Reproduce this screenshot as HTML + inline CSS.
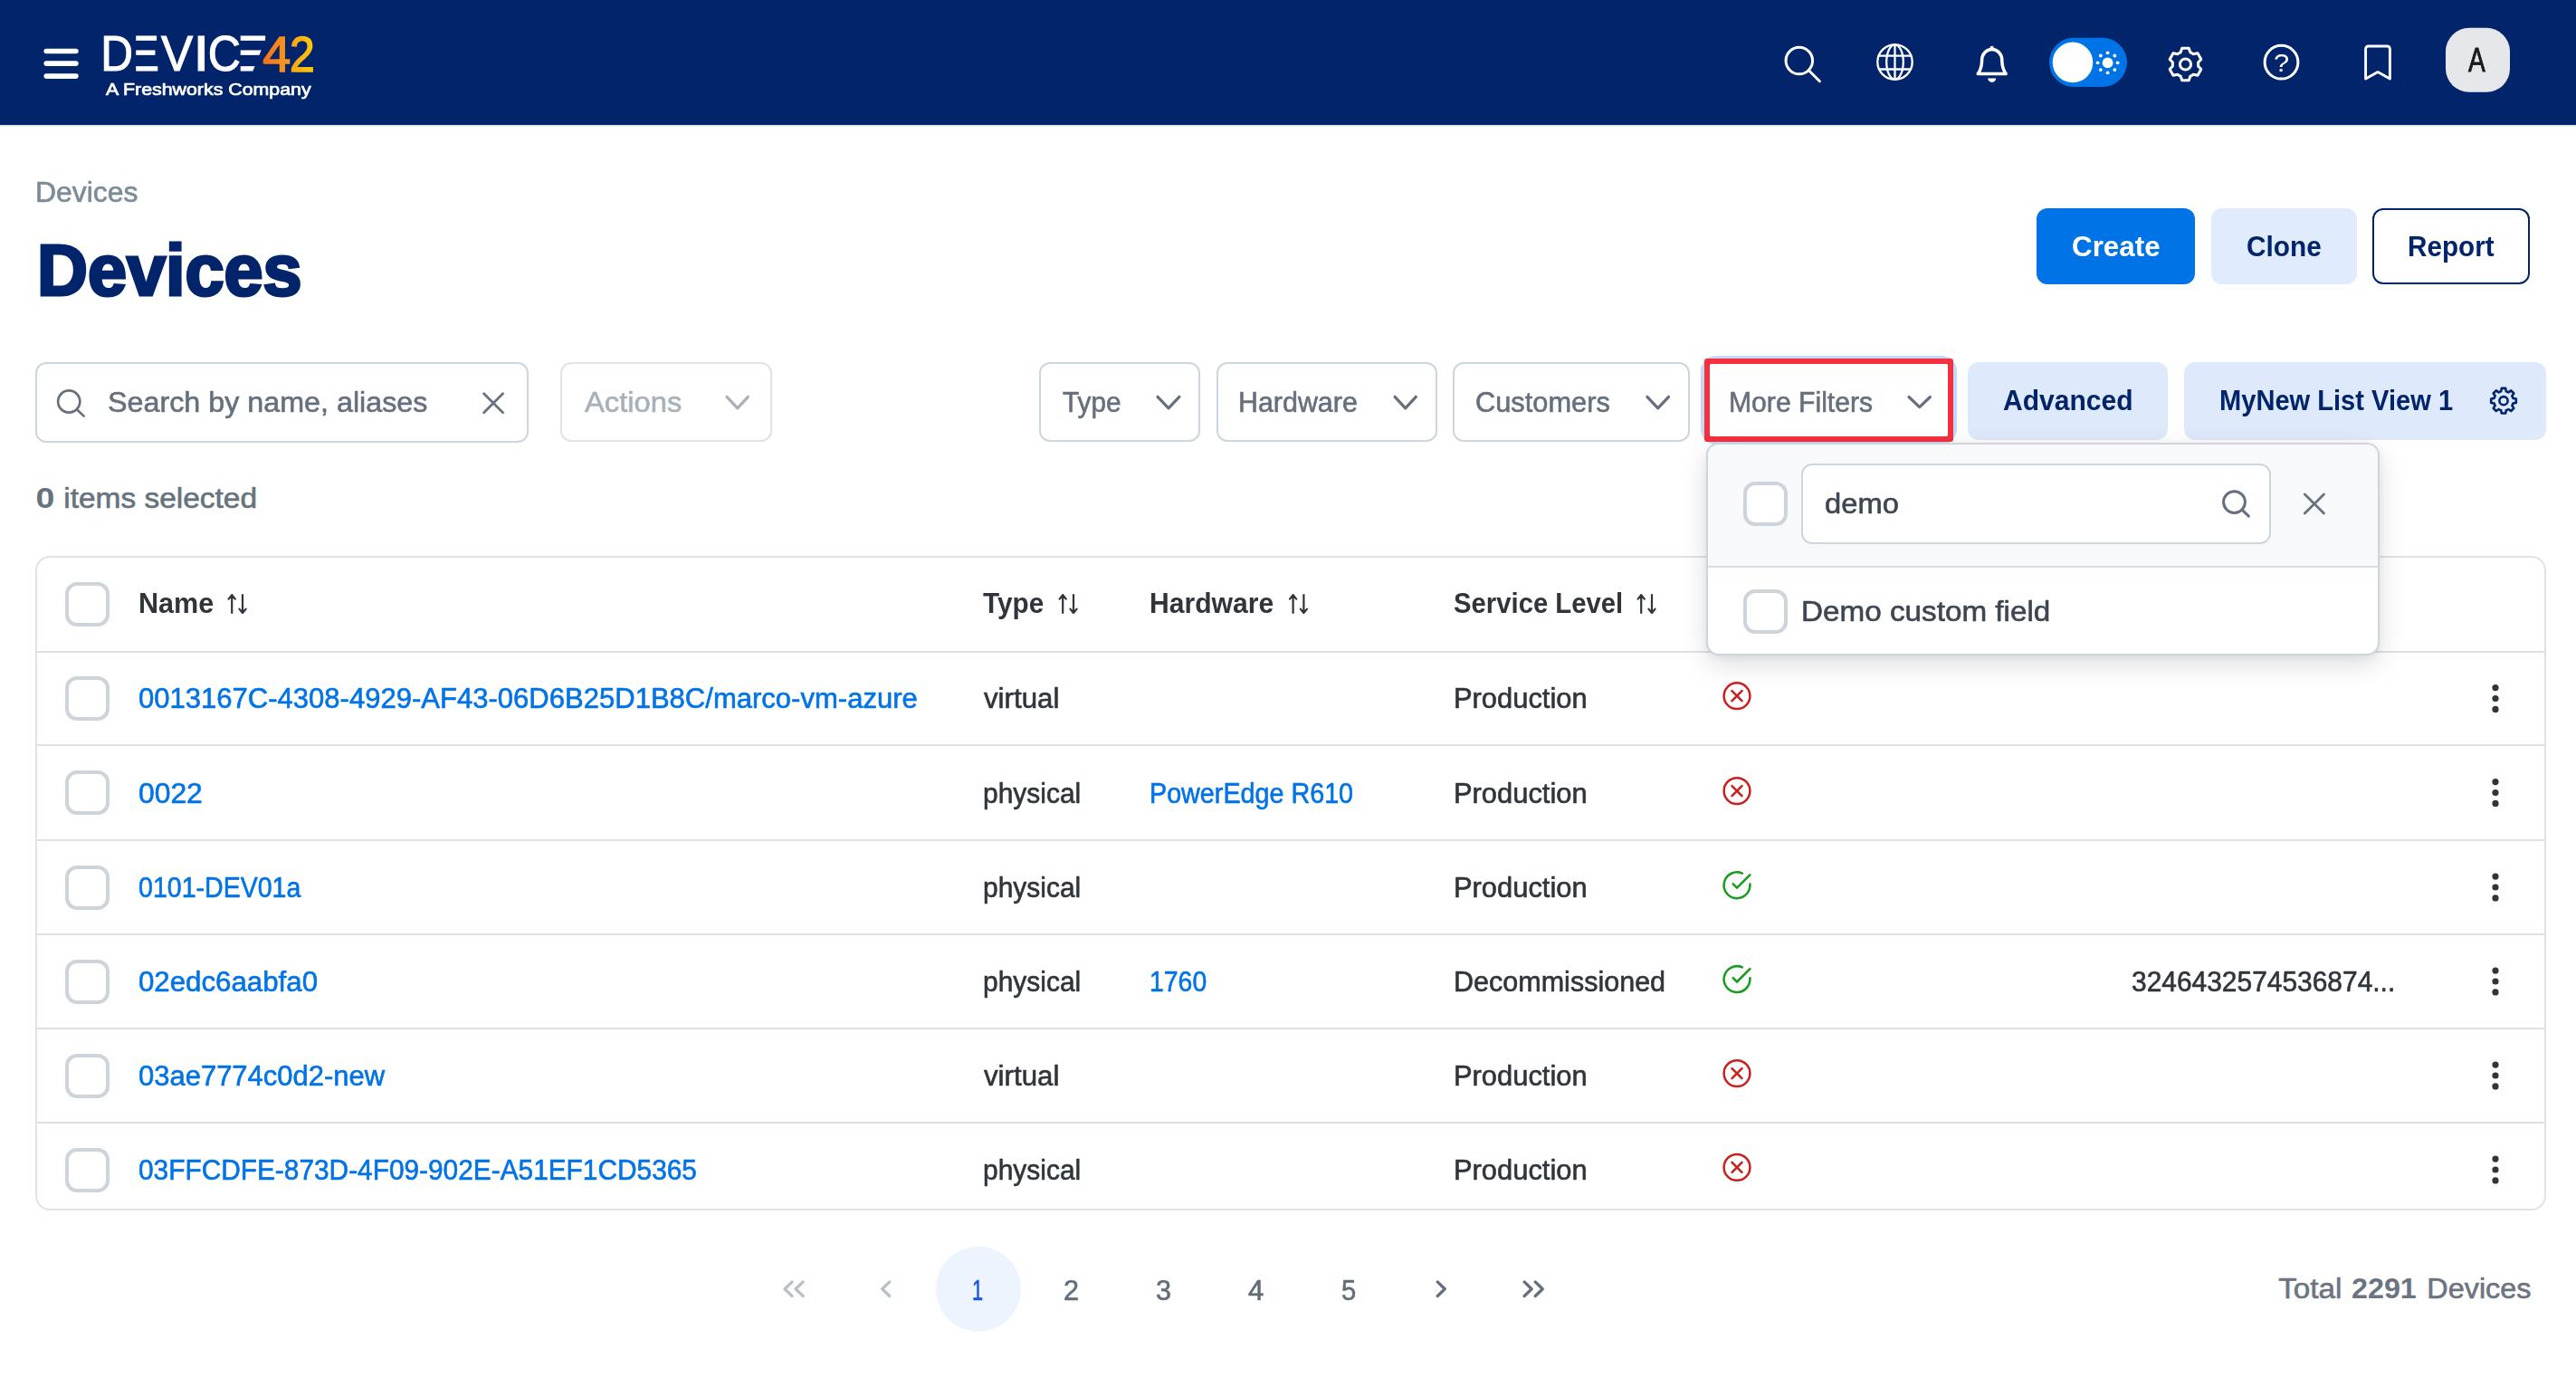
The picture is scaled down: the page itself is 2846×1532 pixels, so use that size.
<!DOCTYPE html>
<html lang="en"><head><meta charset="utf-8"><title>Devices</title>
<style>
html,body{margin:0;padding:0;background:#fff}
body{width:2846px;height:1532px;overflow:hidden;font-family:"Liberation Sans",sans-serif}
#root{position:relative;width:2846px;height:1532px;overflow:hidden;background:#fff}
.t{position:absolute;white-space:nowrap;transform-origin:0 0;display:block;margin:0;padding:0}
.a{position:absolute;box-sizing:border-box}
.cb{position:absolute;box-sizing:border-box;width:49px;height:49px;border:4px solid #ced4dc;border-radius:13px;background:#fff}
.fb{position:absolute;box-sizing:border-box;border:2px solid #cdd5dd;border-radius:12px;background:#fff}
.rl{position:absolute;left:41px;width:2770px;height:2px;background:#dde1e6}
svg{position:absolute;left:0;top:0;overflow:visible}

</style></head>
<body>
<div id="root">
<div class="a" style="left:0;top:0;width:2846px;height:138px;background:#01246b"></div>
<div class="a" style="left:0;top:138px;width:2846px;height:2px;background:#e4e7ea"></div>
<div class="a" style="left:2250px;top:230px;width:175px;height:84px;border-radius:12px;background:#0073e6"></div>
<div class="a" style="left:2443px;top:230px;width:161px;height:84px;border-radius:12px;background:#e0ebfd"></div>
<div class="a" style="left:2621px;top:230px;width:174px;height:84px;border-radius:12px;background:#fff;border:2px solid #01246b"></div>
<div class="fb" style="left:39px;top:400px;width:545px;height:89px"></div>
<div class="fb" style="left:619px;top:400px;width:234px;height:88px;border-color:#dfe4e9"></div>
<div class="fb" style="left:1148px;top:400px;width:178px;height:88px"></div>
<div class="fb" style="left:1344px;top:400px;width:244px;height:88px"></div>
<div class="fb" style="left:1605px;top:400px;width:262px;height:88px"></div>
<div class="fb" style="left:1884px;top:398px;width:273px;height:88px;border-radius:12px;border-color:#0073e6;box-shadow:0 0 0 5px #bfd9fb"></div>
<div class="a" style="left:1883px;top:396px;width:275px;height:92px;border:6px solid #f5303f;border-radius:3px"></div>
<div class="a" style="left:2174px;top:400px;width:221px;height:86px;border-radius:12px;background:#deeafc"></div>
<div class="a" style="left:2413px;top:400px;width:400px;height:86px;border-radius:12px;background:#deeafc"></div>
<div class="a" style="left:39px;top:614px;width:2774px;height:723px;border:2px solid #dfe2e8;border-radius:16px;background:#fff"></div>
<div class="rl" style="top:719px"></div>
<div class="rl" style="top:822px"></div>
<div class="rl" style="top:927px"></div>
<div class="rl" style="top:1031px"></div>
<div class="rl" style="top:1135px"></div>
<div class="rl" style="top:1239px"></div>
<div class="cb" style="left:72px;top:643px"></div>
<div class="cb" style="left:72px;top:747px"></div>
<div class="cb" style="left:72px;top:851px"></div>
<div class="cb" style="left:72px;top:956px"></div>
<div class="cb" style="left:72px;top:1060px"></div>
<div class="cb" style="left:72px;top:1164px"></div>
<div class="cb" style="left:72px;top:1268px"></div>
<div class="a" style="left:1885px;top:489px;width:744px;height:235px;border:2px solid #cdd4dc;border-radius:14px;background:#fff;box-shadow:0 10px 30px rgba(0,0,0,.13), 0 2px 8px rgba(0,0,0,.06);overflow:hidden"><div style="height:134px;background:#f8f9fa;border-bottom:2px solid #d9dee3"></div></div>
<div class="cb" style="left:1926px;top:532px"></div>
<div class="fb" style="left:1990px;top:512px;width:519px;height:89px"></div>
<div class="cb" style="left:1926px;top:650.5px"></div>
<svg width="2846" height="1532" viewBox="0 0 2846 1532">
<path d="M51.2 56.5H83.9M51.2 70.1H83.9M51.2 84.1H83.9" fill="none" stroke="#fff" stroke-width="5.6" stroke-linecap="round"/>
<rect x="2264" y="41.8" width="86" height="54.2" rx="27.1" fill="#0073e6"/><circle cx="2290" cy="68.9" r="22.3" fill="#fff"/>
<rect x="2702" y="30.8" width="71" height="71" rx="26" fill="#e5e7eb"/>
<g fill="none" stroke="#fff" stroke-linecap="round" stroke-linejoin="round" stroke-width="3"><circle cx="1987.8" cy="67.1" r="14.75"/><path d="M1998.4 77.7 L2010.4 89.7"/></g>
<g fill="none" stroke="#fff" stroke-linecap="round" stroke-linejoin="round" stroke-width="2.3"><circle cx="2093.5" cy="68.5" r="19.2"/><ellipse cx="2093.5" cy="68.5" rx="9.3" ry="19.2"/><path d="M2093.5 49.3V87.7M2075.9 61.7H2111.1M2075.9 76.5H2111.1"/></g>
<g fill="none" stroke="#fff" stroke-linecap="round" stroke-linejoin="round" stroke-width="3.5"><path d="M2185.2 81.6 C2188.5 77 2189.6 72 2189.6 66.5 C2189.6 59.5 2194.5 54.6 2200.7 54.6 C2206.9 54.6 2211.8 59.5 2211.8 66.5 C2211.8 72 2212.9 77 2216.2 81.6 Z"/></g>
<circle cx="2200.7" cy="53" r="2.2" fill="#fff"/><path d="M2196.2 86.4 A4.5 4.5 0 0 0 2205.2 86.4 Z" fill="#fff"/>
<circle cx="2328.6" cy="69.3" r="5.9" fill="#fff"/><circle cx="2339.60" cy="69.30" r="1.9" fill="#fff"/><circle cx="2336.38" cy="77.08" r="1.9" fill="#fff"/><circle cx="2328.60" cy="80.30" r="1.9" fill="#fff"/><circle cx="2320.82" cy="77.08" r="1.9" fill="#fff"/><circle cx="2317.60" cy="69.30" r="1.9" fill="#fff"/><circle cx="2320.82" cy="61.52" r="1.9" fill="#fff"/><circle cx="2328.60" cy="58.30" r="1.9" fill="#fff"/><circle cx="2336.38" cy="61.52" r="1.9" fill="#fff"/>
<g fill="none" stroke="#fff" stroke-linecap="round" stroke-linejoin="round" stroke-width="3"><path d="M2409.18 57.83 L2410.72 53.20 L2418.28 53.20 L2419.82 57.83 L2421.60 58.70 L2423.24 59.81 L2428.03 58.82 L2431.81 65.38 L2428.56 69.02 L2428.70 71.00 L2428.56 72.98 L2431.81 76.62 L2428.03 83.18 L2423.24 82.19 L2421.60 83.30 L2419.82 84.17 L2418.28 88.80 L2410.72 88.80 L2409.18 84.17 L2407.40 83.30 L2405.76 82.19 L2400.97 83.18 L2397.19 76.62 L2400.44 72.98 L2400.30 71.00 L2400.44 69.02 L2397.19 65.38 L2400.97 58.82 L2405.76 59.81 L2407.40 58.70 Z"/><circle cx="2414.5" cy="71" r="6.1"/></g>
<g fill="none" stroke="#fff" stroke-linecap="round" stroke-linejoin="round" stroke-width="3"><circle cx="2520.5" cy="68.7" r="18.4"/></g>
<g fill="none" stroke="#fff" stroke-linecap="round" stroke-linejoin="round" stroke-width="2.9"><path d="M2613.6 87 V54 a3 3 0 0 1 3 -3 h20.8 a3 3 0 0 1 3 3 V87 L2627 79.6 Z"/></g>
<g fill="none" stroke="#66707c" stroke-linecap="round" stroke-linejoin="round" stroke-width="2.7"><circle cx="76.2" cy="443.5" r="12.1"/><path d="M84.9 452.2 L92.6 459.6"/></g>
<g fill="none" stroke="#69737e" stroke-linecap="round" stroke-width="2.8"><path d="M534.6 434.8 L555.6 455.8 M555.6 434.8 L534.6 455.8"/></g>
<path d="M803.1 438.3 L814.8 450.8 L826.4 438.3" fill="none" stroke="#a8b1ba" stroke-width="3.2" stroke-linecap="round" stroke-linejoin="round"/>
<path d="M1279.0 438.3 L1291.0 450.8 L1302.9 438.3" fill="none" stroke="#66707c" stroke-linecap="round" stroke-linejoin="round" stroke-width="3.2"/>
<path d="M1541.1 438.3 L1552.7 450.8 L1564.3 438.3" fill="none" stroke="#66707c" stroke-linecap="round" stroke-linejoin="round" stroke-width="3.2"/>
<path d="M1819.9 438.3 L1831.7 450.8 L1843.5 438.3" fill="none" stroke="#66707c" stroke-linecap="round" stroke-linejoin="round" stroke-width="3.2"/>
<path d="M2109.0 438.5 L2120.7 449.6 L2132.4 438.5" fill="none" stroke="#66707c" stroke-linecap="round" stroke-linejoin="round" stroke-width="3.2"/>
<g fill="none" stroke="#01246b" stroke-linejoin="round" stroke-width="2.6"><path d="M2763.20 432.27 L2763.81 428.87 L2768.19 428.87 L2768.80 432.27 L2770.13 432.72 L2771.40 433.35 L2774.23 431.37 L2777.33 434.47 L2775.35 437.30 L2775.98 438.57 L2776.43 439.90 L2779.83 440.51 L2779.83 444.89 L2776.43 445.50 L2775.98 446.83 L2775.35 448.10 L2777.33 450.93 L2774.23 454.03 L2771.40 452.05 L2770.13 452.68 L2768.80 453.13 L2768.19 456.53 L2763.81 456.53 L2763.20 453.13 L2761.87 452.68 L2760.60 452.05 L2757.77 454.03 L2754.67 450.93 L2756.65 448.10 L2756.02 446.83 L2755.57 445.50 L2752.17 444.89 L2752.17 440.51 L2755.57 439.90 L2756.02 438.57 L2756.65 437.30 L2754.67 434.47 L2757.77 431.37 L2760.60 433.35 L2761.87 432.72 Z"/><circle cx="2766" cy="442.7" r="4.6"/></g>
<path d="M256.2 677 V657.2 M252.6 661.6 L256.2 657.2 L259.8 661.6 M268.0 657.2 V677 M264.4 672.6 L268.0 677 L271.6 672.6" fill="none" stroke="#30353c" stroke-width="2.2" stroke-linecap="round" stroke-linejoin="round"/>
<path d="M1174.2 677 V657.2 M1170.6 661.6 L1174.2 657.2 L1177.8 661.6 M1186.0 657.2 V677 M1182.4 672.6 L1186.0 677 L1189.6 672.6" fill="none" stroke="#30353c" stroke-width="2.2" stroke-linecap="round" stroke-linejoin="round"/>
<path d="M1428.6 677 V657.2 M1425.0 661.6 L1428.6 657.2 L1432.2 661.6 M1440.4 657.2 V677 M1436.8 672.6 L1440.4 677 L1444.0 672.6" fill="none" stroke="#30353c" stroke-width="2.2" stroke-linecap="round" stroke-linejoin="round"/>
<path d="M1813.2 677 V657.2 M1809.6 661.6 L1813.2 657.2 L1816.8 661.6 M1825.0 657.2 V677 M1821.4 672.6 L1825.0 677 L1828.6 672.6" fill="none" stroke="#30353c" stroke-width="2.2" stroke-linecap="round" stroke-linejoin="round"/>
<g fill="none" stroke="#c8201f" stroke-width="2.5" stroke-linecap="round"><circle cx="1919.0" cy="768.7" r="14.4"/><path d="M1913.5 763.2 l11 11 M1924.5 763.2 l-11 11"/></g>
<circle cx="2757" cy="759.6" r="3.6" fill="#30353c"/>
<circle cx="2757" cy="771.5" r="3.6" fill="#30353c"/>
<circle cx="2757" cy="783.4" r="3.6" fill="#30353c"/>
<g fill="none" stroke="#c8201f" stroke-width="2.5" stroke-linecap="round"><circle cx="1919.0" cy="873.6" r="14.4"/><path d="M1913.5 868.1 l11 11 M1924.5 868.1 l-11 11"/></g>
<circle cx="2757" cy="863.6" r="3.6" fill="#30353c"/>
<circle cx="2757" cy="875.5" r="3.6" fill="#30353c"/>
<circle cx="2757" cy="887.4" r="3.6" fill="#30353c"/>
<g transform="translate(1901.72 960.52) scale(1.440)" fill="none" stroke="#1a9a1f" stroke-width="1.75" stroke-linecap="round" stroke-linejoin="round"><path d="M22 11.08V12a10 10 0 1 1-5.93-9.14"/><polyline points="22 4 12 14.01 9 11.01"/></g>
<circle cx="2757" cy="968.1" r="3.6" fill="#30353c"/>
<circle cx="2757" cy="980.0" r="3.6" fill="#30353c"/>
<circle cx="2757" cy="991.9" r="3.6" fill="#30353c"/>
<g transform="translate(1901.72 1064.32) scale(1.440)" fill="none" stroke="#1a9a1f" stroke-width="1.75" stroke-linecap="round" stroke-linejoin="round"><path d="M22 11.08V12a10 10 0 1 1-5.93-9.14"/><polyline points="22 4 12 14.01 9 11.01"/></g>
<circle cx="2757" cy="1072.1" r="3.6" fill="#30353c"/>
<circle cx="2757" cy="1084.0" r="3.6" fill="#30353c"/>
<circle cx="2757" cy="1095.9" r="3.6" fill="#30353c"/>
<g fill="none" stroke="#c8201f" stroke-width="2.5" stroke-linecap="round"><circle cx="1919.0" cy="1185.6" r="14.4"/><path d="M1913.5 1180.1 l11 11 M1924.5 1180.1 l-11 11"/></g>
<circle cx="2757" cy="1176.1" r="3.6" fill="#30353c"/>
<circle cx="2757" cy="1188.0" r="3.6" fill="#30353c"/>
<circle cx="2757" cy="1199.9" r="3.6" fill="#30353c"/>
<g fill="none" stroke="#c8201f" stroke-width="2.5" stroke-linecap="round"><circle cx="1919.0" cy="1289.4" r="14.4"/><path d="M1913.5 1283.9 l11 11 M1924.5 1283.9 l-11 11"/></g>
<circle cx="2757" cy="1280.1" r="3.6" fill="#30353c"/>
<circle cx="2757" cy="1292.0" r="3.6" fill="#30353c"/>
<circle cx="2757" cy="1303.9" r="3.6" fill="#30353c"/>
<g fill="none" stroke="#66707c" stroke-linecap="round" stroke-linejoin="round" stroke-width="3"><circle cx="2468.5" cy="554.6" r="11.9"/><path d="M2477 563.1 L2484.4 570.1"/></g>
<g fill="none" stroke="#69737e" stroke-linecap="round" stroke-width="2.8"><path d="M2546.3 545.9 L2567.5 567.1 M2567.5 545.9 L2546.3 567.1"/></g>
<circle cx="1081" cy="1423.8" r="47" fill="#eef4fe"/>
<path d="M875.1 1415.9 L867.0 1423.7 L875.1 1431.5" fill="none" stroke="#b9c0c7" stroke-width="3.3" stroke-linecap="round" stroke-linejoin="round"/>
<path d="M887.2 1415.9 L879.1 1423.7 L887.2 1431.5" fill="none" stroke="#b9c0c7" stroke-width="3.3" stroke-linecap="round" stroke-linejoin="round"/>
<path d="M982.8 1415.9 L974.7 1423.7 L982.8 1431.5" fill="none" stroke="#b9c0c7" stroke-width="3.3" stroke-linecap="round" stroke-linejoin="round"/>
<path d="M1588.2 1415.9 L1596.3 1423.7 L1588.2 1431.5" fill="none" stroke="#66707c" stroke-width="3.3" stroke-linecap="round" stroke-linejoin="round"/>
<path d="M1684.1 1415.9 L1692.2 1423.7 L1684.1 1431.5" fill="none" stroke="#66707c" stroke-width="3.3" stroke-linecap="round" stroke-linejoin="round"/>
<path d="M1696.2 1415.9 L1704.3 1423.7 L1696.2 1431.5" fill="none" stroke="#66707c" stroke-width="3.3" stroke-linecap="round" stroke-linejoin="round"/>
</svg>

<div class="a grp" style="left:0;top:0;z-index:0;white-space:nowrap;font-size:0;line-height:0"><span style="display:inline-block;vertical-align:baseline;white-space:pre;transform-origin:0 0;font-size:31.5px;line-height:31.5px;font-weight:bold;color:#66727e;transform:translate(39.57px,535.00px) scaleX(1.1882);">0</span> <span style="display:inline-block;vertical-align:baseline;white-space:pre;transform-origin:0 0;font-size:31px;line-height:31px;font-weight:normal;color:#66727e;transform:translate(52.20px,535.00px) scaleX(1.0793);-webkit-text-stroke:0.6px #66727e;">items selected</span></div>
<div class="a grp" style="left:0;top:0;z-index:0;white-space:nowrap;font-size:0;line-height:0"><span style="display:inline-block;vertical-align:baseline;white-space:pre;transform-origin:0 0;font-size:31.5px;line-height:31.5px;font-weight:normal;color:#6b7480;transform:translate(2517.17px,1408.00px) scaleX(1.0556);-webkit-text-stroke:0.6px #6b7480;">Total</span> <span style="display:inline-block;vertical-align:baseline;white-space:pre;transform-origin:0 0;font-size:31.5px;line-height:31.5px;font-weight:bold;color:#6b7480;transform:translate(2530.93px,1408.00px) scaleX(1.0263);">2291</span> <span style="display:inline-block;vertical-align:baseline;white-space:pre;transform-origin:0 0;font-size:31.5px;line-height:31.5px;font-weight:normal;color:#6b7480;transform:translate(2544.33px,1408.00px) scaleX(1.0274);-webkit-text-stroke:0.6px #6b7480;">Devices</span></div>
<div class="a grp" style="left:0;top:0;z-index:0;white-space:nowrap;font-size:0;line-height:0"><span style="display:inline-block;vertical-align:baseline;white-space:pre;transform-origin:0 0;position:relative;z-index:3;font-size:56px;line-height:56px;font-weight:normal;color:#fff;transform:translate(111.14px,31.00px) scaleX(0.8834);-webkit-text-stroke:1.1px #fff;">D</span><span style="display:inline-block;vertical-align:baseline;white-space:pre;transform-origin:0 0;position:relative;z-index:1;font-size:56px;line-height:56px;font-weight:normal;color:#fff;transform:translate(98.04px,31.00px) scaleX(1.0203);-webkit-text-stroke:1.1px #fff;">E</span><span style="display:inline-block;vertical-align:baseline;white-space:pre;transform-origin:0 0;position:relative;z-index:3;font-size:56px;line-height:56px;font-weight:normal;color:#fff;transform:translate(99.96px,31.00px) scaleX(0.9414);-webkit-text-stroke:1.1px #fff;">V</span><span style="display:inline-block;vertical-align:baseline;white-space:pre;transform-origin:0 0;position:relative;z-index:3;font-size:56px;line-height:56px;font-weight:normal;color:#fff;transform:translate(98.29px,31.00px) scaleX(1.1680);-webkit-text-stroke:1.1px #fff;">I</span><span style="display:inline-block;vertical-align:baseline;white-space:pre;transform-origin:0 0;position:relative;z-index:3;font-size:56px;line-height:56px;font-weight:normal;color:#fff;transform:translate(98.72px,31.00px) scaleX(0.8938);-webkit-text-stroke:1.1px #fff;">C</span><span style="display:inline-block;vertical-align:baseline;white-space:pre;transform-origin:0 0;position:relative;z-index:1;font-size:56px;line-height:56px;font-weight:normal;color:#fff;transform:translate(81.06px,31.00px) scaleX(1.1964);-webkit-text-stroke:1.1px #fff;">E</span><span style="display:inline-block;vertical-align:baseline;white-space:pre;transform-origin:0 0;position:relative;z-index:3;font-size:56px;line-height:56px;font-weight:normal;color:#f58a1f;transform:translate(81.18px,32.00px) scaleX(0.9922);background:linear-gradient(90deg,#f2701f,#f89c1c);-webkit-background-clip:text;background-clip:text;-webkit-text-fill-color:transparent;-webkit-text-stroke:1.6px transparent;">4</span><span style="display:inline-block;vertical-align:baseline;white-space:pre;transform-origin:0 0;position:relative;z-index:3;font-size:56px;line-height:56px;font-weight:normal;color:#fbb514;transform:translate(80.09px,32.00px) scaleX(0.8898);background:linear-gradient(90deg,#f9a31a,#ffcc08);-webkit-background-clip:text;background-clip:text;-webkit-text-fill-color:transparent;-webkit-text-stroke:1.6px transparent;">2</span><svg style="z-index:2" width="2846" height="1532" viewBox="0 0 2846 1532"><rect x="139.18" y="34" width="11.02" height="50" fill="#01246b"/><rect x="253.74" y="34" width="11.96" height="50" fill="#01246b"/><path d="M295.6 38 L302 38 L302 81 L278.4 81 Z" fill="#01246b"/></svg></div>
<span class="t" style="left:116.55px;top:89px;font-size:19px;line-height:19px;font-weight:normal;color:#fff;transform:scaleX(1.1237);-webkit-text-stroke:0.7px #fff;">A Freshworks Company</span>
<span class="t" style="left:2727.06px;top:49px;font-size:36px;line-height:36px;font-weight:normal;color:#1a1a1a;transform:scaleX(0.7823);-webkit-text-stroke:0.8px #1a1a1a;">A</span>
<span class="t" style="left:2512.03px;top:55px;font-size:28.5px;line-height:28.5px;font-weight:normal;color:#fff;transform:scaleX(1.0863);">?</span>
<span class="t" style="left:39.29px;top:197px;font-size:31px;line-height:31px;font-weight:normal;color:#7b8b97;transform:scaleX(1.0290);-webkit-text-stroke:0.6px #7b8b97;">Devices</span>
<span class="t" style="left:41.08px;top:259px;font-size:79.5px;line-height:79.5px;font-weight:bold;color:#01246b;transform:scaleX(0.9733);-webkit-text-stroke:3.2px #01246b;">Devices</span>
<span class="t" style="left:2288.96px;top:256px;font-size:32px;line-height:32px;font-weight:bold;color:#fff;transform:scaleX(0.9799);">Create</span>
<span class="t" style="left:2481.88px;top:256px;font-size:32px;line-height:32px;font-weight:bold;color:#01246b;transform:scaleX(0.9320);">Clone</span>
<span class="t" style="left:2660.32px;top:256px;font-size:32px;line-height:32px;font-weight:bold;color:#01246b;transform:scaleX(0.9266);">Report</span>
<span class="t" style="left:119.39px;top:429px;font-size:31.5px;line-height:31.5px;font-weight:normal;color:#66707c;transform:scaleX(1.0247);-webkit-text-stroke:0.6px #66707c;">Search by name, aliases</span>
<span class="t" style="left:646.45px;top:429px;font-size:31.5px;line-height:31.5px;font-weight:normal;color:#a8b1ba;transform:scaleX(1.0399);-webkit-text-stroke:0.6px #a8b1ba;">Actions</span>
<span class="t" style="left:1173.61px;top:429px;font-size:31.5px;line-height:31.5px;font-weight:normal;color:#66707c;transform:scaleX(0.9448);-webkit-text-stroke:0.6px #66707c;">Type</span>
<span class="t" style="left:1368.25px;top:429px;font-size:31.5px;line-height:31.5px;font-weight:normal;color:#66707c;transform:scaleX(0.9653);-webkit-text-stroke:0.6px #66707c;">Hardware</span>
<span class="t" style="left:1630.38px;top:429px;font-size:31.5px;line-height:31.5px;font-weight:normal;color:#66707c;transform:scaleX(0.9777);-webkit-text-stroke:0.6px #66707c;">Customers</span>
<span class="t" style="left:1909.81px;top:429px;font-size:31.5px;line-height:31.5px;font-weight:normal;color:#66707c;transform:scaleX(0.9568);-webkit-text-stroke:0.6px #66707c;">More Filters</span>
<span class="t" style="left:2213.00px;top:427px;font-size:31.5px;line-height:31.5px;font-weight:bold;color:#01246b;transform:scaleX(0.9537);">Advanced</span>
<span class="t" style="left:2451.60px;top:427px;font-size:31.5px;line-height:31.5px;font-weight:bold;color:#01246b;transform:scaleX(0.9232);">MyNew List View 1</span>
<span class="t" style="left:2015.99px;top:541px;font-size:31.5px;line-height:31.5px;font-weight:normal;color:#3d4650;transform:scaleX(1.0384);-webkit-text-stroke:0.6px #3d4650;">demo</span>
<span class="t" style="left:1990.09px;top:660px;font-size:31.5px;line-height:31.5px;font-weight:normal;color:#3d4650;transform:scaleX(1.0554);-webkit-text-stroke:0.6px #3d4650;">Demo custom field</span>
<span class="t" style="left:152.50px;top:651px;font-size:31.5px;line-height:31.5px;font-weight:bold;color:#30353c;transform:scaleX(0.9708);">Name</span>
<span class="t" style="left:1086.42px;top:651px;font-size:31.5px;line-height:31.5px;font-weight:bold;color:#30353c;transform:scaleX(0.9448);">Type</span>
<span class="t" style="left:1270.34px;top:651px;font-size:31.5px;line-height:31.5px;font-weight:bold;color:#30353c;transform:scaleX(0.9560);">Hardware</span>
<span class="t" style="left:1605.76px;top:651px;font-size:31.5px;line-height:31.5px;font-weight:bold;color:#30353c;transform:scaleX(0.9296);">Service Level</span>
<span class="t" style="left:152.99px;top:756px;font-size:31px;line-height:31px;font-weight:normal;color:#0073e6;transform:scaleX(1.0011);-webkit-text-stroke:0.6px #0073e6;">0013167C-4308-4929-AF43-06D6B25D1B8C/marco-vm-azure</span>
<span class="t" style="left:1086.85px;top:756px;font-size:31px;line-height:31px;font-weight:normal;color:#30353c;transform:scaleX(1.0079);-webkit-text-stroke:0.6px #30353c;">virtual</span>
<span class="t" style="left:1605.92px;top:756px;font-size:31px;line-height:31px;font-weight:normal;color:#30353c;transform:scaleX(0.9959);-webkit-text-stroke:0.6px #30353c;">Production</span>
<span class="t" style="left:152.96px;top:861px;font-size:31px;line-height:31px;font-weight:normal;color:#0073e6;transform:scaleX(1.0271);-webkit-text-stroke:0.6px #0073e6;">0022</span>
<span class="t" style="left:1085.71px;top:861px;font-size:31px;line-height:31px;font-weight:normal;color:#30353c;transform:scaleX(0.9666);-webkit-text-stroke:0.6px #30353c;">physical</span>
<span class="t" style="left:1270.17px;top:861px;font-size:31px;line-height:31px;font-weight:normal;color:#0073e6;transform:scaleX(0.9263);-webkit-text-stroke:0.6px #0073e6;">PowerEdge R610</span>
<span class="t" style="left:1605.92px;top:861px;font-size:31px;line-height:31px;font-weight:normal;color:#30353c;transform:scaleX(0.9959);-webkit-text-stroke:0.6px #30353c;">Production</span>
<span class="t" style="left:153.06px;top:965px;font-size:31px;line-height:31px;font-weight:normal;color:#0073e6;transform:scaleX(0.9210);-webkit-text-stroke:0.6px #0073e6;">0101-DEV01a</span>
<span class="t" style="left:1085.71px;top:965px;font-size:31px;line-height:31px;font-weight:normal;color:#30353c;transform:scaleX(0.9666);-webkit-text-stroke:0.6px #30353c;">physical</span>
<span class="t" style="left:1605.92px;top:965px;font-size:31px;line-height:31px;font-weight:normal;color:#30353c;transform:scaleX(0.9959);-webkit-text-stroke:0.6px #30353c;">Production</span>
<span class="t" style="left:152.98px;top:1069px;font-size:31px;line-height:31px;font-weight:normal;color:#0073e6;transform:scaleX(1.0077);-webkit-text-stroke:0.6px #0073e6;">02edc6aabfa0</span>
<span class="t" style="left:1085.71px;top:1069px;font-size:31px;line-height:31px;font-weight:normal;color:#30353c;transform:scaleX(0.9666);-webkit-text-stroke:0.6px #30353c;">physical</span>
<span class="t" style="left:1269.76px;top:1069px;font-size:31px;line-height:31px;font-weight:normal;color:#0073e6;transform:scaleX(0.9160);-webkit-text-stroke:0.6px #0073e6;">1760</span>
<span class="t" style="left:1606.09px;top:1069px;font-size:31px;line-height:31px;font-weight:normal;color:#30353c;transform:scaleX(0.9846);-webkit-text-stroke:0.6px #30353c;">Decommissioned</span>
<span class="t" style="left:152.99px;top:1173px;font-size:31px;line-height:31px;font-weight:normal;color:#0073e6;transform:scaleX(0.9992);-webkit-text-stroke:0.6px #0073e6;">03ae7774c0d2-new</span>
<span class="t" style="left:1086.85px;top:1173px;font-size:31px;line-height:31px;font-weight:normal;color:#30353c;transform:scaleX(1.0079);-webkit-text-stroke:0.6px #30353c;">virtual</span>
<span class="t" style="left:1605.92px;top:1173px;font-size:31px;line-height:31px;font-weight:normal;color:#30353c;transform:scaleX(0.9959);-webkit-text-stroke:0.6px #30353c;">Production</span>
<span class="t" style="left:153.02px;top:1277px;font-size:31px;line-height:31px;font-weight:normal;color:#0073e6;transform:scaleX(0.9625);-webkit-text-stroke:0.6px #0073e6;">03FFCDFE-873D-4F09-902E-A51EF1CD5365</span>
<span class="t" style="left:1085.71px;top:1277px;font-size:31px;line-height:31px;font-weight:normal;color:#30353c;transform:scaleX(0.9666);-webkit-text-stroke:0.6px #30353c;">physical</span>
<span class="t" style="left:1605.92px;top:1277px;font-size:31px;line-height:31px;font-weight:normal;color:#30353c;transform:scaleX(0.9959);-webkit-text-stroke:0.6px #30353c;">Production</span>
<span class="t" style="left:2355.20px;top:1069px;font-size:31px;line-height:31px;font-weight:normal;color:#30353c;transform:scaleX(0.9654);-webkit-text-stroke:0.6px #30353c;">3246432574536874...</span>
<span class="t" style="left:1073.75px;top:1410px;font-size:31.5px;line-height:31.5px;font-weight:normal;color:#1a56db;transform:scaleX(0.6911);-webkit-text-stroke:0.6px #1a56db;">1</span>
<span class="t" style="left:1174.85px;top:1410px;font-size:31.5px;line-height:31.5px;font-weight:normal;color:#626d79;transform:scaleX(0.9699);-webkit-text-stroke:0.6px #626d79;">2</span>
<span class="t" style="left:1277.13px;top:1410px;font-size:31.5px;line-height:31.5px;font-weight:normal;color:#626d79;transform:scaleX(0.9720);-webkit-text-stroke:0.6px #626d79;">3</span>
<span class="t" style="left:1379.08px;top:1410px;font-size:31.5px;line-height:31.5px;font-weight:normal;color:#626d79;transform:scaleX(0.9834);-webkit-text-stroke:0.6px #626d79;">4</span>
<span class="t" style="left:1481.51px;top:1410px;font-size:31.5px;line-height:31.5px;font-weight:normal;color:#626d79;transform:scaleX(0.9270);-webkit-text-stroke:0.6px #626d79;">5</span>
</div>
</body></html>
